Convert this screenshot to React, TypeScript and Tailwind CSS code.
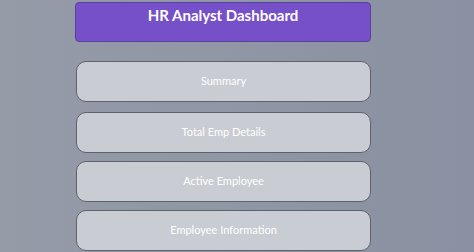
import React from "react";

const items = ["Summary", "Total Emp Details", "Active Employee", "Employee Information"];

export default function App() {
  return (
    <div
      className="w-[474px] h-[252px] overflow-hidden bg-gradient-to-r from-[#959ba7] to-[#8991a2]"
      style={{ fontFamily: 'Lato, "Open Sans", sans-serif' }}
    >
      <div className="ml-[75px] w-[296px] pt-[2px]">
        <div className="h-[40px] rounded-[4px] border border-[#5b3f9e] bg-[#7650c8] flex justify-center pt-[2px]">
          <span className="text-white font-bold text-[15px] leading-[20px]">HR Analyst Dashboard</span>
        </div>
        <div className="mt-[19px] ml-[1px] flex flex-col gap-[8px]">
          {items.map((t, i) => (
            <div
              key={t}
              className={
                "h-[41px] rounded-[10px] border-[1.5px] border-[#5d626d] bg-[#c9ccd3] flex items-center justify-center" +
                (i === 0 ? " mb-[2px]" : "")
              }
            >
              <span className="text-white text-[11px]">{t}</span>
            </div>
          ))}
        </div>
      </div>
    </div>
  );
}
